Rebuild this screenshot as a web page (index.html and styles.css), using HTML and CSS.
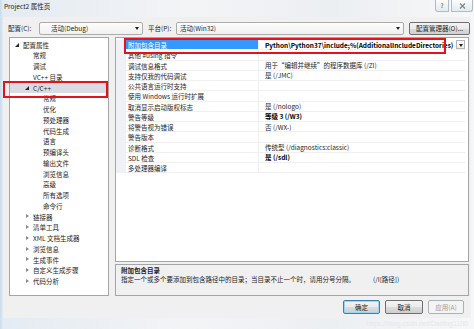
FILE: index.html
```html
<!DOCTYPE html>
<html lang="zh-CN">
<head>
    <meta charset="UTF-8">
    <title>Project2 属性页</title>
    <link rel="stylesheet" href="styles.css">
</head>
<body>
<div class="window">
    <div class="titlebar">
        <span class="title">Project2 属性页</span>
        <div class="caption">
            <span class="cap-btn help">?</span>
            <span class="cap-btn close">
                <svg width="7" height="6" viewBox="0 0 7 6"><path d="M1 0.5 L6 5.5 M6 0.5 L1 5.5" stroke="#7a8390" stroke-width="1.1" fill="none"/></svg>
            </span>
        </div>
    </div>

    <div class="client">
        <!-- 配置 / 平台 -->
        <div class="toolbar">
            <span class="lbl">配置(C):</span>
            <div class="combo combo-cfg"><span class="combo-text">活动(Debug)</span><i class="arrow"></i></div>
            <span class="lbl lbl-plat">平台(P):</span>
            <div class="combo combo-plat"><span class="combo-text">活动(Win32)</span><i class="arrow"></i></div>
            <span class="btn btn-mgr">配置管理器(O)...</span>
        </div>

        <div class="main">
            <!-- 左侧树 -->
            <ul class="tree">
                <li class="lv0"><i class="tw open"></i>配置属性</li>
                <li class="lv1"><i class="tw"></i>常规</li>
                <li class="lv1"><i class="tw"></i>调试</li>
                <li class="lv1"><i class="tw"></i>VC++ 目录</li>
                <li class="lv1 current"><i class="tw open"></i>C/C++</li>
                <li class="lv2"><i class="tw"></i>常规</li>
                <li class="lv2"><i class="tw"></i>优化</li>
                <li class="lv2"><i class="tw"></i>预处理器</li>
                <li class="lv2"><i class="tw"></i>代码生成</li>
                <li class="lv2"><i class="tw"></i>语言</li>
                <li class="lv2"><i class="tw"></i>预编译头</li>
                <li class="lv2"><i class="tw"></i>输出文件</li>
                <li class="lv2"><i class="tw"></i>浏览信息</li>
                <li class="lv2"><i class="tw"></i>高级</li>
                <li class="lv2"><i class="tw"></i>所有选项</li>
                <li class="lv2"><i class="tw"></i>命令行</li>
                <li class="lv1"><i class="tw closed"></i>链接器</li>
                <li class="lv1"><i class="tw closed"></i>清单工具</li>
                <li class="lv1"><i class="tw closed"></i>XML 文档生成器</li>
                <li class="lv1"><i class="tw closed"></i>浏览信息</li>
                <li class="lv1"><i class="tw closed"></i>生成事件</li>
                <li class="lv1"><i class="tw closed"></i>自定义生成步骤</li>
                <li class="lv1"><i class="tw closed"></i>代码分析</li>
            </ul>

            <!-- 右侧属性表 -->
            <div class="side">
                <div class="grid">
                    <div class="row selected"><span class="name">附加包含目录</span><span class="value strong"><span class="val-text">Python\Python37\include;%(AdditionalIncludeDirectories)</span><i class="drop"></i></span></div>
                    <div class="row"><span class="name">其他 #using 指令</span><span class="value"></span></div>
                    <div class="row"><span class="name">调试信息格式</span><span class="value">用于“编辑并继续”的程序数据库 (/ZI)</span></div>
                    <div class="row"><span class="name">支持仅我的代码调试</span><span class="value">是 (/JMC)</span></div>
                    <div class="row"><span class="name">公共语言运行时支持</span><span class="value"></span></div>
                    <div class="row"><span class="name">使用 Windows 运行时扩展</span><span class="value"></span></div>
                    <div class="row"><span class="name">取消显示启动版权标志</span><span class="value">是 (/nologo)</span></div>
                    <div class="row"><span class="name">警告等级</span><span class="value strong">等级 3 (/W3)</span></div>
                    <div class="row"><span class="name">将警告视为错误</span><span class="value">否 (/WX-)</span></div>
                    <div class="row"><span class="name">警告版本</span><span class="value"></span></div>
                    <div class="row"><span class="name">诊断格式</span><span class="value">传统型 (/diagnostics:classic)</span></div>
                    <div class="row"><span class="name">SDL 检查</span><span class="value strong">是 (/sdl)</span></div>
                    <div class="row"><span class="name">多处理器编译</span><span class="value"></span></div>
                </div>
                <div class="desc">
                    <div class="desc-title">附加包含目录</div>
                    <div class="desc-text">指定一个或多个要添加到包含路径中的目录；当目录不止一个时，请用分号分隔。<span class="switch">(/I[路径])</span></div>
                </div>
            </div>
        </div>

        <div class="buttons">
            <span class="btn btn-ok">确定</span>
            <span class="btn btn-cancel">取消</span>
            <span class="btn btn-apply disabled">应用(A)</span>
        </div>
    </div>

    <div class="watermark">https://blog.csdn.net/Darling1100</div>

    <!-- 红框标注 -->
    <div class="mark mark-tree"></div>
    <div class="mark mark-grid"></div>
</div>
</body>
</html>
```

FILE: styles.css
```css
* {
    margin: 0;
    padding: 0;
    box-sizing: border-box;
    list-style: none;
}

body {
    width: 474px;
    height: 329px;
    overflow: hidden;
    background: #fff;
    font-family: "Noto Sans CJK SC", "Noto Sans", sans-serif;
    font-size: 6.5px;
    color: #1e1e1e;
}

.window {
    position: relative;
    width: 474px;
    height: 329px;
    display: flex;
    flex-direction: column;
    background: linear-gradient(to right, #c9dbec 0, #e4ebf2 3px, #f3f4f6 40%, #eceff2 70%, #f6f7f8 100%);
}

/* 标题栏 */
.titlebar {
    height: 17px;
    display: flex;
    align-items: flex-start;
    padding-left: 4px;
}

.title {
    margin-top: 2px;
    line-height: 9px;
    color: #222;
}

.caption {
    margin-left: auto;
    margin-right: 1px;
    display: flex;
    gap: 2px;
}

.cap-btn {
    height: 12px;
    display: flex;
    align-items: center;
    justify-content: center;
    border: 1px solid #b2bac4;
    border-top: 0;
    background: linear-gradient(#fafbfc, #e6eaee);
    color: #7a8390;
    font-size: 6px;
    font-weight: bold;
}

.help {
    width: 14px;
    border-radius: 0 0 0 3px;
}

.close {
    width: 22px;
    border-radius: 0 0 3px 0;
}

/* 客户区 */
.client {
    height: 301px;
    margin: 0 3px;
    padding: 4px 1px 0 5px;
    background: #f0f0f0;
    display: flex;
    flex-direction: column;
}

.toolbar {
    height: 14px;
    display: flex;
    align-items: center;
}

.lbl {
    width: 31px;
}

.lbl-plat {
    width: 28px;
    margin-left: 5px;
}

.combo {
    height: 13px;
    display: flex;
    align-items: center;
    border: 1px solid #acacac;
    border-radius: 2px;
    background: linear-gradient(#fdfdfd, #f0f0f0);
    padding: 0 3px 0 3px;
}

.combo-cfg {
    width: 104px;
    padding-left: 11px;
}

.combo-plat {
    width: 228px;
}

.combo-text {
    flex: 1;
}

.arrow {
    width: 0;
    height: 0;
    border-left: 2.5px solid transparent;
    border-right: 2.5px solid transparent;
    border-top: 3px solid #222;
}

.btn {
    height: 14px;
    display: flex;
    align-items: center;
    justify-content: center;
    border: 1px solid #707070;
    border-radius: 2px;
    background: linear-gradient(#f3f3f3 0, #ebebeb 50%, #dddddd 51%, #cfcfcf 100%);
    color: #1e1e1e;
}

.btn-mgr {
    width: 61px;
    height: 13px;
    margin-left: 5px;
}

/* 主体 */
.main {
    height: 259px;
    margin-top: 2px;
    display: flex;
}

.tree {
    width: 100px;
    margin-left: 1px;
    border: 1px solid #a5a5a5;
    background: #fff;
    padding-top: 1.6px;
}

.tree li {
    height: 10.75px;
    line-height: 10.75px;
    display: flex;
    align-items: center;
    white-space: nowrap;
}

.tree .lv0 { padding-left: 3px; }
.tree .lv1 { padding-left: 13px; }
.tree .lv2 { padding-left: 23px; }

.tree li.current {
    background: #d9dce5;
}

.tw {
    width: 10px;
    height: 6px;
    flex: none;
    position: relative;
}

.tw.open::before {
    content: "";
    position: absolute;
    left: 2px;
    top: 1px;
    border-left: 4px solid transparent;
    border-bottom: 4px solid #262626;
}

.tw.closed::before {
    content: "";
    position: absolute;
    left: 3px;
    top: 0.5px;
    border-top: 2.5px solid transparent;
    border-bottom: 2.5px solid transparent;
    border-left: 3px solid #8a8a8a;
}

.side {
    flex: 1;
    margin-left: 6px;
    margin-right: 1px;
    display: flex;
    flex-direction: column;
}

.grid {
    height: 225px;
    border: 1px solid #a5a5a5;
    background: #fff;
    padding: 2px 3px 0 0;
}

.row {
    height: 10.25px;
    display: flex;
    padding-left: 10px;
    background: linear-gradient(to right, #eff1f6 10px, transparent 10px);
}

.name {
    width: 133px;
    padding-left: 2px;
    line-height: 10px;
    border-bottom: 1px solid #f0f0f0;
    border-right: 1px solid #f0f0f0;
    white-space: nowrap;
}

.row.selected .name {
    background: #3399ff;
    color: #fff;
    border-bottom-color: #fff;
}

.value {
    flex: 1;
    padding-left: 6px;
    line-height: 10px;
    border-bottom: 1px solid #f0f0f0;
    white-space: nowrap;
    display: flex;
    align-items: center;
}

.val-text {
    flex: 1;
}

.strong {
    font-weight: bold;
    color: #000;
}

.drop {
    width: 9px;
    height: 9px;
    border: 1px solid #b5b5b5;
    background: linear-gradient(#fff, #ececec);
    position: relative;
}

.drop::after {
    content: "";
    position: absolute;
    left: 1.5px;
    top: 2.5px;
    border-left: 2.5px solid transparent;
    border-right: 2.5px solid transparent;
    border-top: 3px solid #222;
}

.desc {
    height: 32px;
    margin-top: 2px;
    border: 1px solid #a5a5a5;
    background: #f0f0f0;
    padding: 1px 5px 0 5px;
    line-height: 9px;
}

.desc-title {
    font-weight: bold;
}

.switch {
    margin-left: 18px;
}

/* 底部按钮 */
.buttons {
    margin-top: 4px;
    padding-right: 6px;
    display: flex;
    justify-content: flex-end;
    gap: 5px;
}

.btn-ok {
    width: 37px;
    border-color: #3c7fb1;
    box-shadow: inset 0 0 0 1px #9ad5f5;
}

.btn-cancel {
    width: 38px;
}

.btn-apply {
    width: 36px;
}

.btn.disabled {
    border-color: #adb2b5;
    background: #f4f4f4;
    color: #9a9a9a;
}

.watermark {
    margin: 2px 6px 0 auto;
    font-family: "Liberation Sans", sans-serif;
    font-size: 7px;
    color: #e6e8ea;
}

/* 标注红框 */
.mark {
    position: absolute;
    border: 2px solid #e3121c;
}

.mark-tree {
    left: 3px;
    top: 81px;
    width: 105px;
    height: 17px;
}

.mark-grid {
    left: 124px;
    top: 38px;
    width: 322px;
    height: 16px;
}
```
